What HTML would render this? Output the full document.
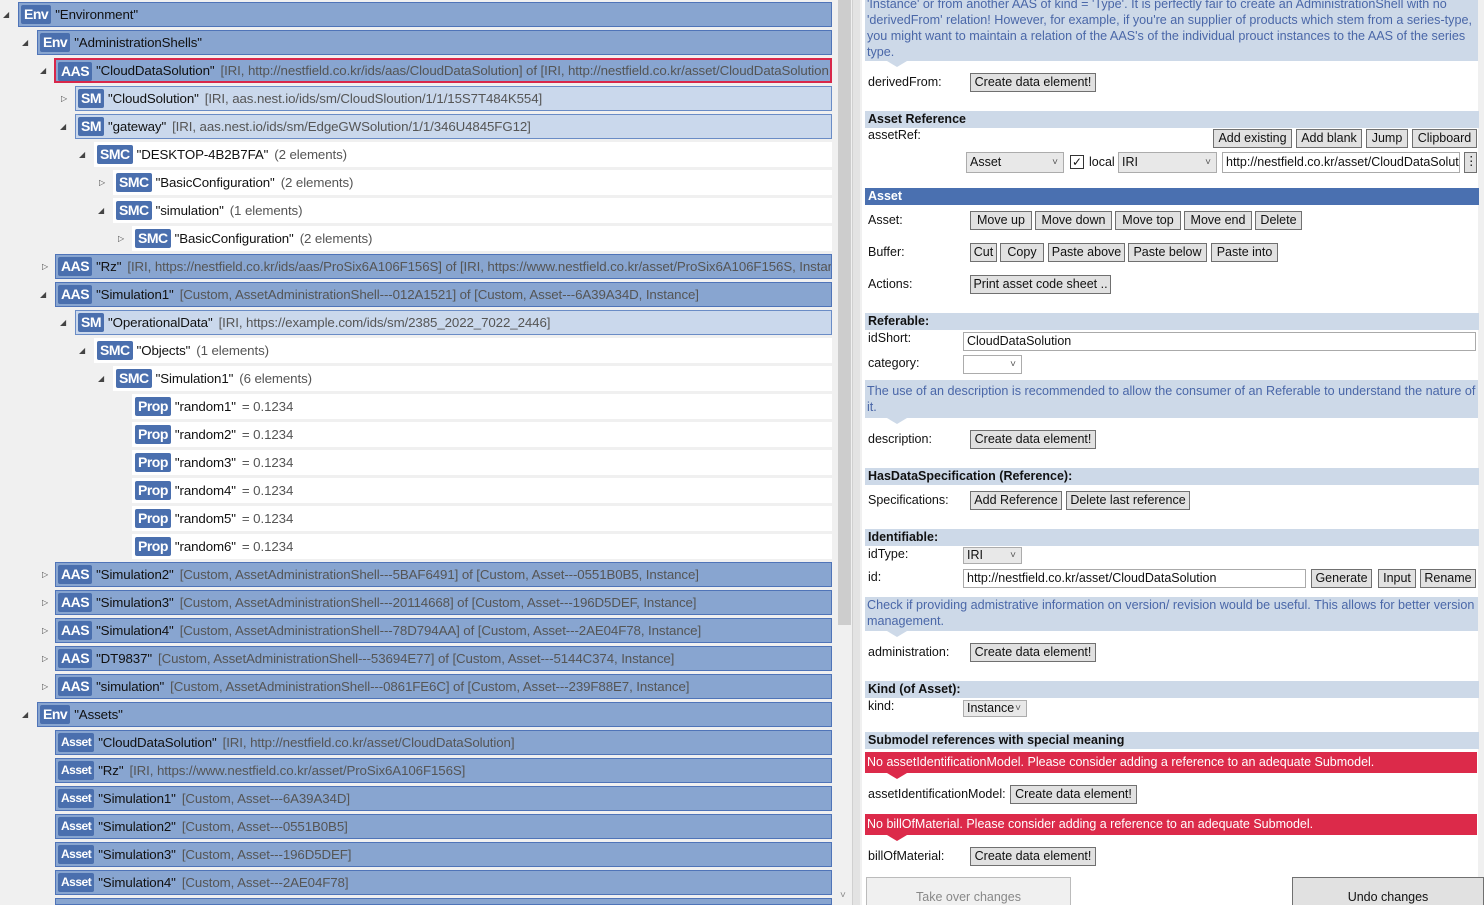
<!DOCTYPE html>
<html style="overflow:hidden;height:905px"><head><meta charset="utf-8"><style>
*{box-sizing:border-box;margin:0;padding:0}
body{width:1484px;height:905px;overflow:hidden;background:#f0f0f0;font-family:"Liberation Sans",sans-serif;font-size:12.5px;color:#111;position:relative}
.a{position:absolute;white-space:nowrap}
.row{position:absolute;height:25px;right:652px;border:1px solid #4f74b8;background:#88a5d0;line-height:23px;font-size:13.3px;letter-spacing:-0.1px;overflow:hidden;white-space:nowrap}
.row.l{background:#cad8ec;border-color:#6a8cc6}
.row.w{background:#fff;border-color:#fff}
.row.sel{border:2px solid #d8274a;line-height:21px}
.b{display:inline-block;background:#4a6fae;color:#fff;font-weight:bold;font-size:14px;padding:0 3px;height:19px;line-height:19px;margin:2px 4px 0 2px;vertical-align:top;border-radius:2px;letter-spacing:-0.5px}
.b.s{font-size:12px}
.x{color:#555;margin-left:6px}
.e{position:absolute;font-size:8px;color:#444;line-height:10px}
.pan{position:absolute;left:862px;top:0;width:616px;height:905px;background:#fff}
.hd{position:absolute;left:865px;width:614px;height:17px;background:#cdd9e8;font-weight:bold;padding-left:3px;line-height:17px}
.hd.bl{background:#4a70b0;color:#fff}
.hint{position:absolute;left:865px;width:613px;background:#cdd9e8;color:#4a67a8;padding:0 2px;line-height:16px;font-size:12.6px}
.hint:after{content:"";position:absolute;left:22px;bottom:-6px;border-left:10px solid transparent;border-right:10px solid transparent;border-top:6px solid #cdd9e8}
.lb{position:absolute;left:868px;line-height:14px}
.btn{position:absolute;height:19px;border:1px solid #707070;background:#e1e1e1;text-align:center;line-height:17px;white-space:nowrap}
.tb{position:absolute;height:19px;border:1px solid #aaa;background:#fff;padding-left:3px;line-height:17px;white-space:nowrap;overflow:hidden}
.cb{position:absolute;height:19px;border:1px solid #acacac;background:#e8e8e8;padding-left:3px;line-height:17px}
.cb:after{content:"˅";position:absolute;right:5px;top:0;font-size:10px;color:#555}
.cb.wh{background:#fff}
.red{position:absolute;left:865px;width:612px;height:21px;background:#dc2a4a;color:#fff;line-height:21px;padding-left:2px}
.red:after{content:"";position:absolute;left:22px;bottom:-6px;border-left:10px solid transparent;border-right:10px solid transparent;border-top:6px solid #dc2a4a}
</style></head><body>

<div class="e" style="left:3px;top:10px">◢</div><div class="row" style="left:18px;top:2px"><span class="b">Env</span>"Environment"</div>
<div class="e" style="left:22px;top:38px">◢</div><div class="row" style="left:37px;top:30px"><span class="b">Env</span>"AdministrationShells"</div>
<div class="e" style="left:40px;top:66px">◢</div><div class="row sel" style="left:54px;top:58px"><span class="b">AAS</span>"CloudDataSolution"<span class="x">[IRI, http://nestfield.co.kr/ids/aas/CloudDataSolution] of [IRI, http://nestfield.co.kr/asset/CloudDataSolution, Instance]</span></div>
<div class="e" style="left:61px;top:94px">▷</div><div class="row l" style="left:75px;top:86px"><span class="b">SM</span>"CloudSolution"<span class="x">[IRI, aas.nest.io/ids/sm/CloudSloution/1/1/15S7T484K554]</span></div>
<div class="e" style="left:60px;top:122px">◢</div><div class="row l" style="left:75px;top:114px"><span class="b">SM</span>"gateway"<span class="x">[IRI, aas.nest.io/ids/sm/EdgeGWSolution/1/1/346U4845FG12]</span></div>
<div class="e" style="left:79px;top:150px">◢</div><div class="row w" style="left:94px;top:142px"><span class="b">SMC</span>"DESKTOP-4B2B7FA"<span class="x">(2 elements)</span></div>
<div class="e" style="left:99px;top:178px">▷</div><div class="row w" style="left:113px;top:170px"><span class="b">SMC</span>"BasicConfiguration"<span class="x">(2 elements)</span></div>
<div class="e" style="left:98px;top:206px">◢</div><div class="row w" style="left:113px;top:198px"><span class="b">SMC</span>"simulation"<span class="x">(1 elements)</span></div>
<div class="e" style="left:118px;top:234px">▷</div><div class="row w" style="left:132px;top:226px"><span class="b">SMC</span>"BasicConfiguration"<span class="x">(2 elements)</span></div>
<div class="e" style="left:42px;top:262px">▷</div><div class="row" style="left:55px;top:254px"><span class="b">AAS</span>"Rz"<span class="x">[IRI, https://nestfield.co.kr/ids/aas/ProSix6A106F156S] of [IRI, https://www.nestfield.co.kr/asset/ProSix6A106F156S, Instance]</span></div>
<div class="e" style="left:40px;top:290px">◢</div><div class="row" style="left:55px;top:282px"><span class="b">AAS</span>"Simulation1"<span class="x">[Custom, AssetAdministrationShell---012A1521] of [Custom, Asset---6A39A34D, Instance]</span></div>
<div class="e" style="left:60px;top:318px">◢</div><div class="row l" style="left:75px;top:310px"><span class="b">SM</span>"OperationalData"<span class="x">[IRI, https://example.com/ids/sm/2385_2022_7022_2446]</span></div>
<div class="e" style="left:79px;top:346px">◢</div><div class="row w" style="left:94px;top:338px"><span class="b">SMC</span>"Objects"<span class="x">(1 elements)</span></div>
<div class="e" style="left:98px;top:374px">◢</div><div class="row w" style="left:113px;top:366px"><span class="b">SMC</span>"Simulation1"<span class="x">(6 elements)</span></div>
<div class="row w" style="left:132px;top:394px"><span class="b">Prop</span>"random1"<span class="x">= 0.1234</span></div>
<div class="row w" style="left:132px;top:422px"><span class="b">Prop</span>"random2"<span class="x">= 0.1234</span></div>
<div class="row w" style="left:132px;top:450px"><span class="b">Prop</span>"random3"<span class="x">= 0.1234</span></div>
<div class="row w" style="left:132px;top:478px"><span class="b">Prop</span>"random4"<span class="x">= 0.1234</span></div>
<div class="row w" style="left:132px;top:506px"><span class="b">Prop</span>"random5"<span class="x">= 0.1234</span></div>
<div class="row w" style="left:132px;top:534px"><span class="b">Prop</span>"random6"<span class="x">= 0.1234</span></div>
<div class="e" style="left:42px;top:570px">▷</div><div class="row" style="left:55px;top:562px"><span class="b">AAS</span>"Simulation2"<span class="x">[Custom, AssetAdministrationShell---5BAF6491] of [Custom, Asset---0551B0B5, Instance]</span></div>
<div class="e" style="left:42px;top:598px">▷</div><div class="row" style="left:55px;top:590px"><span class="b">AAS</span>"Simulation3"<span class="x">[Custom, AssetAdministrationShell---20114668] of [Custom, Asset---196D5DEF, Instance]</span></div>
<div class="e" style="left:42px;top:626px">▷</div><div class="row" style="left:55px;top:618px"><span class="b">AAS</span>"Simulation4"<span class="x">[Custom, AssetAdministrationShell---78D794AA] of [Custom, Asset---2AE04F78, Instance]</span></div>
<div class="e" style="left:42px;top:654px">▷</div><div class="row" style="left:55px;top:646px"><span class="b">AAS</span>"DT9837"<span class="x">[Custom, AssetAdministrationShell---53694E77] of [Custom, Asset---5144C374, Instance]</span></div>
<div class="e" style="left:42px;top:682px">▷</div><div class="row" style="left:55px;top:674px"><span class="b">AAS</span>"simulation"<span class="x">[Custom, AssetAdministrationShell---0861FE6C] of [Custom, Asset---239F88E7, Instance]</span></div>
<div class="e" style="left:22px;top:710px">◢</div><div class="row" style="left:37px;top:702px"><span class="b">Env</span>"Assets"</div>
<div class="row" style="left:55px;top:730px"><span class="b s">Asset</span>"CloudDataSolution"<span class="x">[IRI, http://nestfield.co.kr/asset/CloudDataSolution]</span></div>
<div class="row" style="left:55px;top:758px"><span class="b s">Asset</span>"Rz"<span class="x">[IRI, https://www.nestfield.co.kr/asset/ProSix6A106F156S]</span></div>
<div class="row" style="left:55px;top:786px"><span class="b s">Asset</span>"Simulation1"<span class="x">[Custom, Asset---6A39A34D]</span></div>
<div class="row" style="left:55px;top:814px"><span class="b s">Asset</span>"Simulation2"<span class="x">[Custom, Asset---0551B0B5]</span></div>
<div class="row" style="left:55px;top:842px"><span class="b s">Asset</span>"Simulation3"<span class="x">[Custom, Asset---196D5DEF]</span></div>
<div class="row" style="left:55px;top:870px"><span class="b s">Asset</span>"Simulation4"<span class="x">[Custom, Asset---2AE04F78]</span></div>
<div class="row" style="left:55px;top:898px;height:7px"></div>

<div class="a" style="left:836px;top:0;width:16px;height:905px;background:#f0f0f0"></div>
<div class="a" style="left:838px;top:0;width:13px;height:625px;background:#cdcdcd"></div>
<div class="a" style="left:840px;top:890px;font-size:10px;color:#888">˅</div>
<div class="a" style="left:852px;top:0;width:8px;height:905px;background:#e3e3e3;border-left:1px solid #d0d0d0"></div>

<div class="pan"></div>
<div class="a" style="left:1478px;top:0;width:6px;height:905px;background:#f0f0f0"></div>
<div class="hint" style="top:-12px;height:73px;padding-top:8px">'Instance' or from another AAS of kind = 'Type'. It is perfectly fair to create an AdministrationShell with no<br>'derivedFrom' relation! However, for example, if you're an supplier of products which stem from a series-type,<br>you might want to maintain a relation of the AAS's of the individual prouct instances to the AAS of the series<br>type.</div>
<div class="lb" style="top:75px">derivedFrom:</div><div class="btn" style="left:970px;top:73px;width:126px">Create data element!</div>

<div class="hd" style="top:111px">Asset Reference</div>
<div class="lb" style="top:128px">assetRef:</div>
<div class="btn" style="left:1213px;top:129px;width:79px">Add existing</div>
<div class="btn" style="left:1296px;top:129px;width:66px">Add blank</div>
<div class="btn" style="left:1366px;top:129px;width:42px">Jump</div>
<div class="btn" style="left:1412px;top:129px;width:65px">Clipboard</div>
<div class="cb" style="left:966px;top:152px;width:98px;height:21px;line-height:19px">Asset</div>
<div class="a" style="left:1070px;top:155px;width:14px;height:14px;border:1px solid #333;background:#fff;font-size:12px;line-height:12px;text-align:center">✓</div>
<div class="a" style="left:1089px;top:155px">local</div>
<div class="cb" style="left:1118px;top:152px;width:99px;height:21px;line-height:19px">IRI</div>
<div class="tb" style="left:1222px;top:152px;width:238px;height:21px;line-height:19px">http://nestfield.co.kr/asset/CloudDataSolution</div>
<div class="btn" style="left:1464px;top:152px;width:13px;height:21px">⋮</div>

<div class="hd bl" style="top:188px">Asset</div>
<div class="lb" style="top:213px">Asset:</div>
<div class="btn" style="left:970px;top:211px;width:62px">Move up</div>
<div class="btn" style="left:1035px;top:211px;width:77px">Move down</div>
<div class="btn" style="left:1115px;top:211px;width:66px">Move top</div>
<div class="btn" style="left:1184px;top:211px;width:68px">Move end</div>
<div class="btn" style="left:1255px;top:211px;width:47px">Delete</div>
<div class="lb" style="top:245px">Buffer:</div>
<div class="btn" style="left:970px;top:243px;width:27px">Cut</div>
<div class="btn" style="left:1000px;top:243px;width:44px">Copy</div>
<div class="btn" style="left:1048px;top:243px;width:77px">Paste above</div>
<div class="btn" style="left:1128px;top:243px;width:79px">Paste below</div>
<div class="btn" style="left:1211px;top:243px;width:67px">Paste into</div>
<div class="lb" style="top:277px">Actions:</div>
<div class="btn" style="left:970px;top:275px;width:141px">Print asset code sheet ..</div>

<div class="hd" style="top:313px">Referable:</div>
<div class="lb" style="top:331px">idShort:</div>
<div class="tb" style="left:963px;top:332px;width:513px">CloudDataSolution</div>
<div class="lb" style="top:356px">category:</div>
<div class="cb wh" style="left:963px;top:355px;width:59px"></div>
<div class="hint" style="top:380px;height:38px;padding-top:3px">The use of an description is recommended to allow the consumer of an Referable to understand the nature of<br>it.</div>
<div class="lb" style="top:432px">description:</div><div class="btn" style="left:970px;top:430px;width:126px">Create data element!</div>

<div class="hd" style="top:468px">HasDataSpecification (Reference):</div>
<div class="lb" style="top:493px">Specifications:</div>
<div class="btn" style="left:970px;top:491px;width:92px">Add Reference</div>
<div class="btn" style="left:1066px;top:491px;width:124px">Delete last reference</div>

<div class="hd" style="top:529px">Identifiable:</div>
<div class="lb" style="top:547px">idType:</div>
<div class="cb" style="left:963px;top:547px;width:59px;height:17px;line-height:15px">IRI</div>
<div class="lb" style="top:570px">id:</div>
<div class="tb" style="left:963px;top:569px;width:343px">http://nestfield.co.kr/asset/CloudDataSolution</div>
<div class="btn" style="left:1311px;top:569px;width:61px">Generate</div>
<div class="btn" style="left:1378px;top:569px;width:38px">Input</div>
<div class="btn" style="left:1420px;top:569px;width:56px">Rename</div>
<div class="hint" style="top:597px;height:34px;padding-top:0">Check if providing admistrative information on version/ revision would be useful. This allows for better version<br>management.</div>
<div class="lb" style="top:645px">administration:</div><div class="btn" style="left:970px;top:643px;width:126px">Create data element!</div>

<div class="hd" style="top:681px">Kind (of Asset):</div>
<div class="lb" style="top:699px">kind:</div>
<div class="cb" style="left:963px;top:700px;width:64px;height:17px;line-height:15px">Instance</div>

<div class="hd" style="top:732px">Submodel references with special meaning</div>
<div class="red" style="top:752px">No assetIdentificationModel. Please consider adding a reference to an adequate Submodel.</div>
<div class="lb" style="top:787px">assetIdentificationModel:</div><div class="btn" style="left:1010px;top:785px;width:127px">Create data element!</div>
<div class="red" style="top:814px">No billOfMaterial. Please consider adding a reference to an adequate Submodel.</div>
<div class="lb" style="top:849px">billOfMaterial:</div><div class="btn" style="left:970px;top:847px;width:126px">Create data element!</div>

<div class="btn" style="left:866px;top:877px;width:205px;height:28px;line-height:38px;color:#888;border-color:#bbb;border-bottom:none;background:#f0f0f0">Take over changes</div>
<div class="btn" style="left:1292px;top:877px;width:192px;height:28px;line-height:38px;border-bottom:none;background:#e1e1e1">Undo changes</div>
</body></html>
